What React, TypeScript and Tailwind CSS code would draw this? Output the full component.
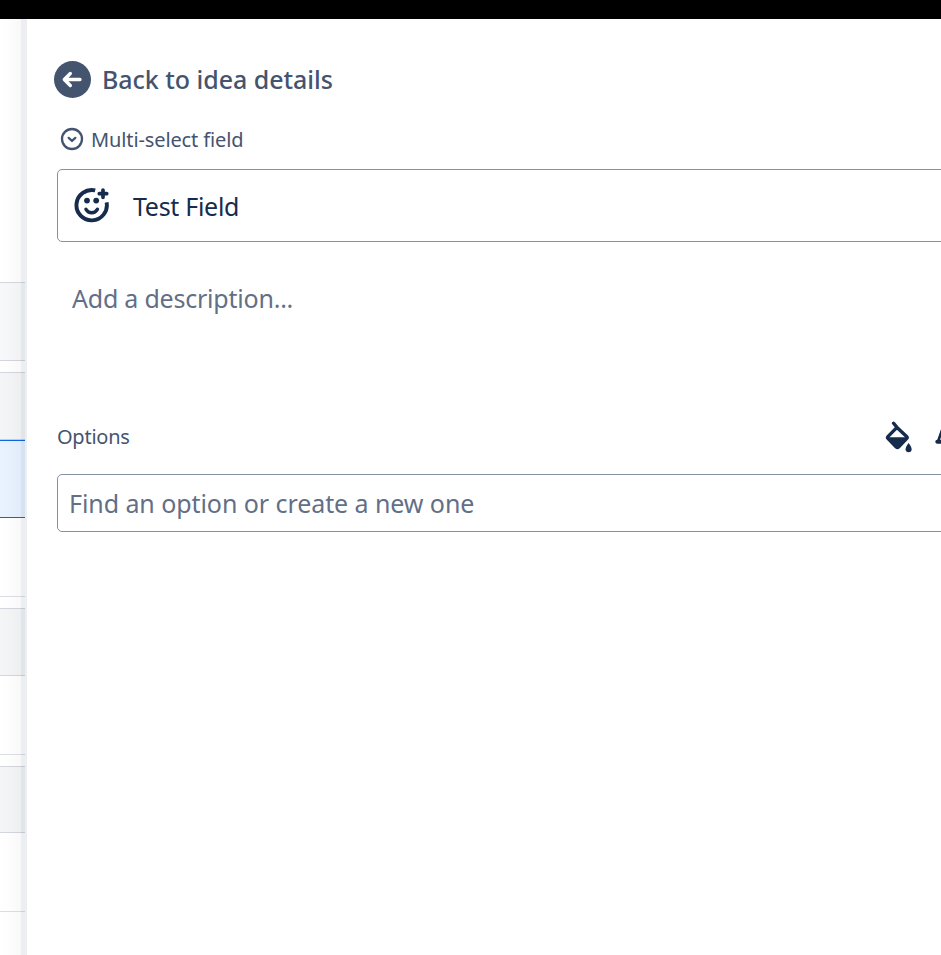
import React from "react";

interface RailRow {
  height: string;
  fill: string;
  line: string;
}

// Rows of the list that stays visible to the left of the panel
const railRows: RailRow[] = [
  { height: "h-[264px]", fill: "bg-white", line: "border-[#d5d8de]" },
  { height: "h-[78px]", fill: "bg-[#f7f8f9]", line: "border-[#d3d6dc]" },
  { height: "h-[12px]", fill: "bg-white", line: "border-[#d3d6dc]" },
  { height: "h-[67px]", fill: "bg-[#f4f5f6]", line: "border-[#c4cfdc]" },
  { height: "h-[1px]", fill: "bg-[#0c66e4]", line: "border-[#0c66e4]" },
  { height: "h-[77px]", fill: "bg-[#e9f2ff]", line: "border-[#0c66e4]" },
  { height: "h-[79px]", fill: "bg-white", line: "border-[#dcdee3]" },
  { height: "h-[12px]", fill: "bg-white", line: "border-[#d3d6dc]" },
  { height: "h-[67px]", fill: "bg-[#f4f5f6]", line: "border-[#d3d6dc]" },
  { height: "h-[79px]", fill: "bg-white", line: "border-[#dcdee3]" },
  { height: "h-[12px]", fill: "bg-white", line: "border-[#d3d6dc]" },
  { height: "h-[66px]", fill: "bg-[#f4f5f6]", line: "border-[#d3d6dc]" },
  { height: "h-[79px]", fill: "bg-white", line: "border-[#dcdee3]" },
];

const Rail: React.FC = () => (
  <div className="relative w-[27px] shrink-0 overflow-hidden bg-white">
    <div className="w-[25px]">
      {railRows.map((row, i) => (
        <div key={i} className={`border-b ${row.height} ${row.fill} ${row.line}`} />
      ))}
    </div>
    {/* Panel shadow */}
    <div className="absolute inset-y-0 left-0 w-[21px] bg-gradient-to-r from-[#091e42]/0 via-[#091e42]/1 to-[#091e42]/3" />
    <div className="absolute inset-y-0 right-0 w-[6px] bg-[#0f2850]/8" />
  </div>
);

const BackIcon: React.FC = () => (
  <svg width="38" height="38" viewBox="0 0 38 38" fill="none">
    <circle cx="19.5" cy="19.5" r="18.5" fill="#44546f" />
    <path d="M27 19.5H12M17.3 13.5l-6 6 6 6" stroke="white" strokeWidth="3.4" strokeLinecap="round" strokeLinejoin="round" />
  </svg>
);

const MultiSelectIcon: React.FC = () => (
  <svg width="24" height="24" viewBox="0 0 24 24" fill="none" stroke="#44546f" strokeWidth="2.3" strokeLinecap="round" strokeLinejoin="round">
    <circle cx="12" cy="12" r="10" />
    <path d="M8.7 10.9l3.3 3.1 3.3-3.1" />
  </svg>
);

const EmojiAddIcon: React.FC = () => (
  <svg className="mb-[2px]" width="36" height="36" viewBox="0 0 36 36" fill="none" stroke="#172b4d" strokeLinecap="round">
    <path d="M21.2 3.4A15.2 15.2 0 1 0 32.6 15.4" strokeWidth="3.9" strokeLinecap="butt" />
    <path d="M12 22.3c1.4 2.3 3.4 3.4 5.7 3.4s4.300-1.100 5.700-3.400" strokeWidth="3.5" />
    <path d="M29 3.100v7.200M25.300 6.700h7.400" strokeWidth="3.700" />
    <circle cx="13" cy="13.600" r="2.900" fill="#172b4d" stroke="none" />
    <circle cx="22.200" cy="13.600" r="2.900" fill="#172b4d" stroke="none" />
  </svg>
);

const PaintBucketIcon: React.FC = () => (
  <svg width="28" height="34" viewBox="0 0 28 34" fill="none">
    <path d="M8.6 3.200l3.400 4.200M12 7.400L21.600 16.400q1.100 1.100 0 2.200L13.500 27q-1.100 1-2.200 0L3.100 18.600q-1.100-1.100 0-2.200z" stroke="#172b4d" strokeWidth="3.4" strokeLinecap="round" strokeLinejoin="round" />
    <path d="M2.500 17.200h19.800L14 27.500a2.200 2.200 0 0 1-3.200 0z" fill="#172b4d" />
    <path d="M23.600 23c-1.800 2.500-3 4.300-3 6.200a3 3 0 0 0 6 0c0-1.900-1.200-3.700-3-6.200z" fill="#172b4d" />
  </svg>
);

const BellIcon: React.FC = () => (
  <svg className="shrink-0" width="24" height="32" viewBox="0 0 24 32" fill="none" stroke="#172b4d" strokeLinejoin="round">
    <path d="M2.300 20.700h19.400" strokeWidth="4" strokeLinecap="round" />
    <path d="M3.400 19.500L7 9.200a5.400 5.400 0 0 1 10 0L20.600 19.500" strokeWidth="2.600" />
  </svg>
);

export default function App() {
  return (
    <div className="flex h-[955px] w-[941px] flex-col overflow-hidden bg-white font-['Segoe_UI','Noto_Sans',sans-serif]">
      <div className="h-[19px] shrink-0 bg-black" />
      <div className="flex min-h-0 flex-1">
        <Rail />
        <main className="w-[960px] shrink-0 pl-[30px] pt-[40px]">
          {/* Back link */}
          <button className="-ml-[4px] flex h-[40px] items-center gap-[11px]">
            <BackIcon />
            <span className="whitespace-nowrap text-[25px] font-medium leading-[40px] tracking-[-0.03px] text-[#44546f]">Back to idea details</span>
          </button>

          {/* Field type */}
          <div className="mt-[20px] flex h-[40px] items-center gap-[7px] pl-[3px]">
            <MultiSelectIcon />
            <span className="whitespace-nowrap pt-[2px] text-[20px] leading-[40px] tracking-[-0.12px] text-[#44546f]">Multi-select field</span>
          </div>

          {/* Field name */}
          <div className="mt-[10px] flex h-[73px] items-center rounded-[5px] border border-[#8590a2] pl-[16px]">
            <EmojiAddIcon />
            <span className="ml-[23px] whitespace-nowrap text-[25px] leading-[40px] tracking-[-0.3px] text-[#172b4d]">Test Field</span>
          </div>

          <p className="mt-[36px] h-[40px] whitespace-nowrap pl-[15px] text-[25px] leading-[40px] tracking-[-0.22px] text-[#626f86]">Add a description...</p>

          {/* Options */}
          <div className="mt-[99px] flex h-[40px] items-center">
            <h2 className="w-[828px] text-[20px] font-normal leading-[40px] tracking-[-0.25px] text-[#44546f]">Options</h2>
            <div className="flex items-center gap-[22px]">
              <PaintBucketIcon />
              <BellIcon />
            </div>
          </div>
          <div className="mt-[17px] flex h-[58px] items-center rounded-[5px] border border-[#8590a2] pl-[11px]">
            <span className="whitespace-nowrap text-[25px] leading-[40px] tracking-[-0.07px] text-[#626f86]">Find an option or create a new one</span>
          </div>
        </main>
      </div>
    </div>
  );
}
